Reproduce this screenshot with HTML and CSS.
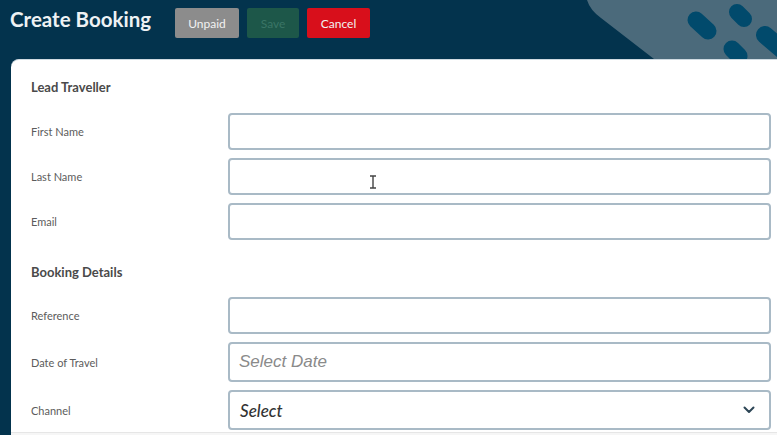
FILE: index.html
```html
<!DOCTYPE html>
<html lang="en">
<head>
<meta charset="utf-8">
<title>Create Booking</title>
<link rel="stylesheet" href="styles.css">
</head>
<body>
<div class="page">
  <header class="topbar">
    <h1 class="title">Create Booking</h1>
    <div class="actions">
      <button class="btn btn-unpaid">Unpaid</button>
      <button class="btn btn-save">Save</button>
      <button class="btn btn-cancel">Cancel</button>
    </div>
    <svg class="decor" width="217" height="59" viewBox="560 0 217 59" aria-hidden="true">
      <path d="M587 0 Q590 10 601 18 L654 59 L777 59 L777 0 Z" fill="#4b6a7b"/>
      <g stroke="#014a6c" stroke-linecap="round" fill="none">
        <line x1="696" y1="20" x2="708" y2="31" stroke-width="17"/>
        <line x1="737" y1="12" x2="744" y2="19" stroke-width="16"/>
        <line x1="732" y1="49" x2="739" y2="56" stroke-width="17"/>
        <line x1="765" y1="35" x2="792" y2="58" stroke-width="18"/>
      </g>
    </svg>
  </header>
  <main class="card">
    <h2 class="section-title first">Lead Traveller</h2>
    <div class="rows">
      <label class="label">First Name</label>
      <div class="field"></div>
      <label class="label">Last Name</label>
      <div class="field has-cursor">
        <svg class="cursor" width="8" height="14" viewBox="0 0 8 14" aria-hidden="true">
          <path d="M1 1 H7 M4 1 V13 M1 13 H7" stroke="#444" stroke-width="1.4" fill="none"/>
        </svg>
      </div>
      <label class="label">Email</label>
      <div class="field"></div>
    </div>
    <h2 class="section-title second">Booking Details</h2>
    <div class="rows">
      <label class="label">Reference</label>
      <div class="field"></div>
      <label class="label">Date of Travel</label>
      <div class="field tall"><span class="placeholder">Select Date</span></div>
      <label class="label">Channel</label>
      <div class="field tall select"><span class="select-value">Select</span>
        <svg class="chevron" width="12" height="8" viewBox="0 0 12 8" aria-hidden="true">
          <path d="M1.5 1.5 L6 6 L10.5 1.5" stroke="#2d4656" stroke-width="2" fill="none" stroke-linecap="round" stroke-linejoin="round"/>
        </svg>
      </div>
    </div>
    <div class="card-foot"></div>
  </main>
</div>
</body>
</html>
```

FILE: styles.css
```css
* { box-sizing: border-box; }
html, body { margin: 0; padding: 0; }
body {
  width: 777px;
  height: 435px;
  overflow: hidden;
  background: #03334d;
  font-family: Lato, "Liberation Sans", sans-serif;
}
.page {
  display: flex;
  flex-direction: column;
  height: 435px;
}
.topbar {
  position: relative;
  height: 59px;
  display: flex;
  align-items: flex-start;
  padding-left: 10px;
  flex: none;
}
.title {
  margin: 6px 0 0 0;
  font-size: 20.5px;
  line-height: 26px;
  font-weight: 700;
  color: #eef2f4;
  letter-spacing: 0;
}
.actions {
  display: flex;
  gap: 8px;
  margin-left: 24px;
  margin-top: 8px;
}
.btn {
  height: 30px;
  border: none;
  border-radius: 2px;
  font-family: Lato, "Liberation Sans", sans-serif;
  font-size: 12px;
  color: #f2f2f2;
  padding: 0;
}
.btn-unpaid { width: 64px; background: #8c8c8c; }
.btn-save { width: 52px; background: #1d5749; color: #3a7566; }
.btn-cancel { width: 63px; background: #d80f1b; }
.decor {
  position: absolute;
  right: 0;
  top: 0;
}
.card {
  flex: 1;
  margin-left: 11px;
  background: #ffffff;
  border-top-left-radius: 8px;
  border-top: 1px solid #cfdae1;
  padding: 17px 6px 0 20px;
  display: flex;
  flex-direction: column;
}
.section-title {
  margin: 0;
  font-size: 13px;
  line-height: 20px;
  font-weight: 700;
  color: #4a4a4a;
}
.section-title.first { margin-bottom: 16px; }
.section-title.second { margin-top: 22px; margin-bottom: 15px; }
.rows {
  display: grid;
  grid-template-columns: 197px 1fr;
  row-gap: 8px;
  align-items: center;
}
.label {
  font-size: 11px;
  color: #5c5c5c;
}
.field {
  height: 37px;
  border: 2px solid #a9bac6;
  border-radius: 4px;
  background: #fff;
  display: flex;
  align-items: center;
  padding-left: 9px;
}
.field.tall { height: 40px; }
.has-cursor { position: relative; }
.cursor {
  position: absolute;
  left: 139px;
  top: 15px;
}
.placeholder {
  font-family: "Liberation Sans", Arial, sans-serif;
  font-style: italic;
  font-size: 17px;
  color: #8a8a8a;
}
.select { justify-content: space-between; padding-right: 14px; padding-left: 10px; }
.select-value {
  font-style: italic;
  font-size: 17px;
  color: #333;
  font-weight: 500;
}
.card-foot {
  margin-top: 2px;
  flex: 1;
  margin-left: -20px;
  margin-right: -6px;
  border-top: 1px solid #e6e6e6;
  background: #f6f6f6;
}
```
